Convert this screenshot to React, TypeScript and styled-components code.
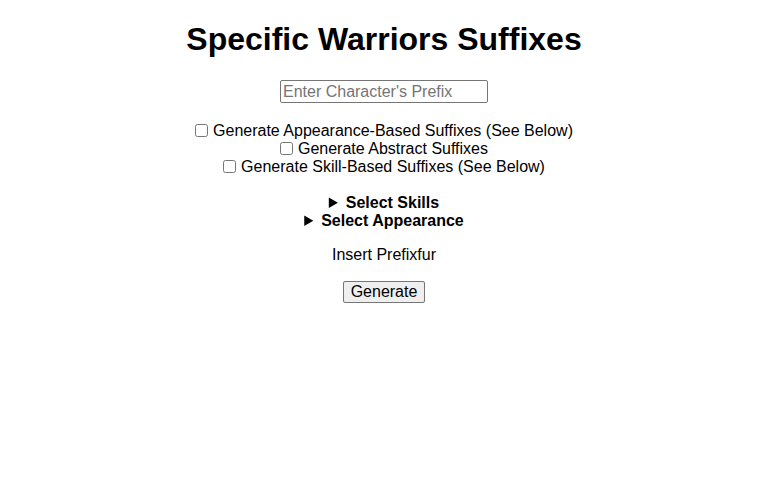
import React from "react";
import styled, { createGlobalStyle } from "styled-components";

const Global = createGlobalStyle`
  html, body {
    margin: 0;
    padding: 0;
    background: #ffffff;
  }
  body {
    font-family: "Liberation Sans", Arial, sans-serif;
    font-size: 16px;
    color: #000000;
  }
`;

const Page = styled.main`
  display: flex;
  flex-direction: column;
  align-items: center;
  text-align: center;
`;

const Title = styled.h1`
  margin: 21px 0 0;
  font-size: 32px;
  line-height: 37px;
  font-weight: bold;
`;

const PrefixInput = styled.input`
  margin-top: 22px;
  box-sizing: border-box;
  width: 208px;
  height: 23px;
  padding: 1px 2px;
  border: 1px solid #767676;
  border-radius: 2px;
  font-family: inherit;
  font-size: 16px;
  &::placeholder {
    color: #757575;
  }
`;

const Options = styled.div`
  margin-top: 19px;
  display: flex;
  flex-direction: column;
  align-items: center;
`;

const OptionRow = styled.label`
  display: flex;
  align-items: center;
  height: 18px;
  line-height: 18px;
`;

const Check = styled.input`
  margin: 0 5px 2px 0;
  width: 13px;
  height: 13px;
`;

const Pickers = styled.div`
  margin-top: 18px;
  display: flex;
  flex-direction: column;
  align-items: center;
`;

const Picker = styled.details`
  line-height: 18px;
`;

const PickerTitle = styled.summary`
  font-weight: bold;
  cursor: pointer;
`;

const Result = styled.p`
  margin: 16px 0 0;
  line-height: 18px;
`;

const GenerateButton = styled.button`
  margin-top: 17px;
  box-sizing: border-box;
  width: 82px;
  height: 22px;
  padding: 0 6px;
  border: 1px solid #767676;
  border-radius: 2px;
  background: #efefef;
  font-family: inherit;
  font-size: 16px;
  color: #000;
  line-height: 18px;
`;

const options = [
  "Generate Appearance-Based Suffixes (See Below)",
  "Generate Abstract Suffixes",
  "Generate Skill-Based Suffixes (See Below)",
];

export default function App() {
  return (
    <Page>
      <Global />
      <Title>Specific Warriors Suffixes</Title>
      <PrefixInput type="text" placeholder="Enter Character's Prefix" />
      <Options>
        {options.map((o) => (
          <OptionRow key={o}>
            <Check type="checkbox" />
            {o}
          </OptionRow>
        ))}
      </Options>
      <Pickers>
        <Picker>
          <PickerTitle>Select Skills</PickerTitle>
        </Picker>
        <Picker>
          <PickerTitle>Select Appearance</PickerTitle>
        </Picker>
      </Pickers>
      <Result>Insert Prefixfur</Result>
      <GenerateButton>Generate</GenerateButton>
    </Page>
  );
}
